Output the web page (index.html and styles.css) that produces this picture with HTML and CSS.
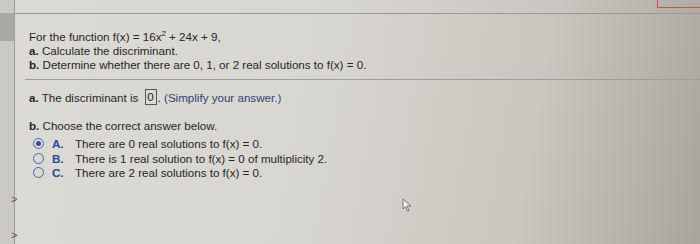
FILE: index.html
```html
<!DOCTYPE html>
<html>
<head>
<meta charset="utf-8">
<link rel="stylesheet" href="styles.css">
</head>
<body>
<div class="screen">
  <aside class="side">
    <div class="side-block"></div>
    <div class="side-fill"></div>
    <span class="chev chev1">&gt;</span>
    <span class="chev chev2">&gt;</span>
  </aside>
  <main class="main">
    <div class="topbar"><div class="redbox"></div></div>
    <section class="question">
      <p>For the function f(x) = 16x<sup>2</sup> + 24x + 9,</p>
      <p><b>a.</b> Calculate the discriminant.</p>
      <p><b>b.</b> Determine whether there are 0, 1, or 2 real solutions to f(x) = 0.</p>
    </section>
    <section class="answer">
      <p class="line-a"><b>a.</b> The discriminant is <span class="box">0</span>. <span class="hint">(Simplify your answer.)</span></p>
      <p class="line-b"><b>b.</b> Choose the correct answer below.</p>
      <div class="opts">
        <div class="opt"><span class="radio on"></span><b class="let">A.</b><span>There are 0 real solutions to f(x) = 0.</span></div>
        <div class="opt"><span class="radio"></span><b class="let">B.</b><span>There is 1 real solution to f(x) = 0 of multiplicity 2.</span></div>
        <div class="opt"><span class="radio"></span><b class="let">C.</b><span>There are 2 real solutions to f(x) = 0.</span></div>
      </div>
    </section>
    <svg class="cursor" width="12" height="14" viewBox="0 0 12 14"><path d="M1 1 L1 11 L3.5 8.5 L5.5 13 L7 12.3 L5 8 L9 8 Z" fill="#f4f4f2" stroke="#6a6a66" stroke-width="0.9"/></svg>
  </main>
</div>
</body>
</html>
```
FILE: styles.css
```css
html, body { margin: 0; padding: 0; }
body { width: 700px; height: 244px; overflow: hidden; font-family: "Liberation Sans", Arial, sans-serif; }
.screen { display: flex; width: 700px; height: 244px; background: linear-gradient(100deg, #dcdad5 0%, #d8d6d0 45%, #c9c6bf 75%, #a9a59d 100%); }
.side { position: relative; width: 14px; flex: none; display: flex; flex-direction: column; background: #cbc9c4; border-right: 1px solid #9c9a95; }
.side-block { height: 28px; margin-top: 13px; background: #aaa8a3; }
.side-fill { flex: 1; }
.chev { position: absolute; left: 11px; font-size: 11px; color: #555; }
.chev1 { top: 193px; }
.chev2 { top: 229px; }
.main { position: relative; flex: 1; display: flex; flex-direction: column; }
.topbar { height: 13px; border-bottom: 1px solid #9a9893; display: flex; justify-content: flex-end; }
.redbox { width: 42px; height: 7px; border: 1px solid #c2584a; border-top: none; border-right: none; }
p { margin: 0; }
.question { margin: 0 0 0 10px; padding: 16px 0 7px 4px; border-bottom: 1px solid #9f9d98; font-size: 11.6px; line-height: 14px; color: #262626; }
sup { font-size: 8px; line-height: 0; vertical-align: 5px; }
.answer { padding: 9px 0 0 14px; font-size: 11.6px; color: #262626; }
.line-a { display: flex; align-items: center; white-space: pre; }
.box { display: inline-block; width: 10px; height: 14px; border: 1px solid #4d5a54; text-align: center; line-height: 14px; margin: 0 1px 0 3px; }
.hint { color: #33456f; }
.line-b { margin-top: 14px; }
.opts { margin-top: 5px; display: flex; flex-direction: column; gap: 1.5px; }
.opt { display: flex; align-items: center; height: 13px; }
.radio { width: 9px; height: 9px; border: 1.5px solid #4a66b0; border-radius: 50%; margin-left: 4px; margin-right: 8px; box-sizing: content-box; display: flex; align-items: center; justify-content: center; }
.radio.on::after { content: ""; width: 5px; height: 5px; border-radius: 50%; background: #2f4f9e; }
.let { color: #2c4a8e; width: 23px; }
.cursor { position: absolute; left: 387px; top: 198px; }
```
